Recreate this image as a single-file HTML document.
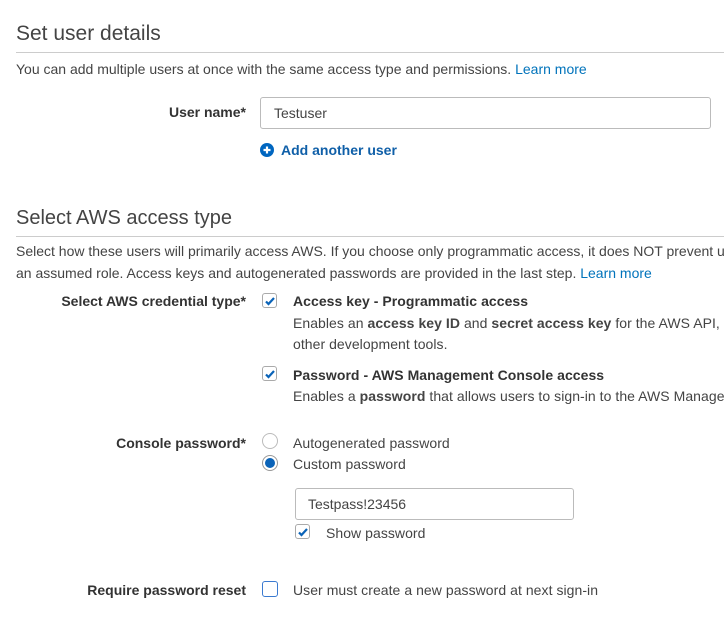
<!DOCTYPE html>
<html><head><style>
html,body{margin:0;width:724px;height:635px;overflow:hidden}
body{background:#fff;position:relative;font-family:"Liberation Sans",Arial,sans-serif;color:#444}
#w{position:absolute;left:0;top:0;width:724px;height:635px;overflow:hidden}
.a{position:absolute;white-space:nowrap}
h{position:absolute;font-size:21px;color:#444;white-space:nowrap}
.hr{position:absolute;left:16px;right:0;height:1px;background:#ccc}
.p{font-size:14px;color:#444}
.l{color:#0073bb}
.lab{font-weight:bold;font-size:14px;color:#333;text-align:right;right:478px}
.v{font-size:14px;color:#444;letter-spacing:0.05px}
.inp{position:absolute;border:1px solid #bbb;border-radius:3px;background:#fff;box-sizing:border-box;font-size:14px;color:#444;padding-left:13px;line-height:29px}
.cb{position:absolute;width:15px;height:15px;border:1px solid #aaa;border-radius:3px;box-sizing:border-box;background:#fff}
.cb svg{position:absolute;left:1px;top:1px}
.rd{position:absolute;width:16px;height:16px;border:1px solid #bbb;border-radius:50%;box-sizing:border-box}
</style></head><body><div id="w">
<h style="left:16px;top:22px">Set user details</h>
<div class="hr" style="top:52px"></div>
<div class="a p" style="left:16px;top:61px">You can add multiple users at once with the same access type and permissions. <span class="l">Learn more</span></div>
<div class="a lab" style="top:104px">User name*</div>
<div class="inp" style="left:260px;top:97px;width:451px;height:32px;line-height:31px">Testuser</div>
<svg class="a" style="left:260px;top:143px" width="14" height="14"><circle cx="7" cy="7" r="7" fill="#0066c0"/><path d="M7 3.5v7M3.5 7h7" stroke="#fff" stroke-width="2.2"/></svg>
<div class="a" style="left:281px;top:142px;font-size:14px;font-weight:bold;color:#0f5fa8">Add another user</div>

<h style="left:16px;top:207px;font-size:20px">Select AWS access type</h>
<div class="hr" style="top:236px"></div>
<div class="a p" style="left:16px;top:243px">Select how these users will primarily access AWS. If you choose only programmatic access, it does NOT prevent users from accessing via</div>
<div class="a p" style="left:16px;top:265px">an assumed role. Access keys and autogenerated passwords are provided in the last step. <span class="l">Learn more</span></div>

<div class="a lab" style="top:293px">Select AWS credential type*</div>
<div class="cb" style="left:262px;top:293px"><svg width="12" height="12"><path d="M2 6.5l2.5 2.5 5.5-6" stroke="#0a63b8" stroke-width="2.2" fill="none"/></svg></div>
<div class="a v" style="left:293px;top:293px;font-weight:bold;color:#333">Access key - Programmatic access</div>
<div class="a v" style="left:293px;top:315px">Enables an <b>access key ID</b> and <b>secret access key</b> for the AWS API, CLI, SDK, and</div>
<div class="a v" style="left:293px;top:336px">other development tools.</div>
<div class="cb" style="left:262px;top:366px"><svg width="12" height="12"><path d="M2 6.5l2.5 2.5 5.5-6" stroke="#0a63b8" stroke-width="2.2" fill="none"/></svg></div>
<div class="a v" style="left:293px;top:367px;font-weight:bold;color:#333">Password - AWS Management Console access</div>
<div class="a v" style="left:293px;top:388px">Enables a <b>password</b> that allows users to sign-in to the AWS Management Console.</div>

<div class="a lab" style="top:435px">Console password*</div>
<div class="rd" style="left:262px;top:433px"></div>
<div class="a v" style="left:293px;top:435px">Autogenerated password</div>
<div class="rd" style="left:262px;top:455px;border-color:#999"><div style="position:absolute;left:2px;top:2px;width:10px;height:10px;border-radius:50%;background:#0a63b8"></div></div>
<div class="a v" style="left:293px;top:456px">Custom password</div>
<div class="inp" style="left:295px;top:488px;width:279px;height:32px;padding-left:12px;line-height:31px">Testpass!23456</div>
<div class="cb" style="left:295px;top:524px"><svg width="12" height="12"><path d="M2 6.5l2.5 2.5 5.5-6" stroke="#0a63b8" stroke-width="2.2" fill="none"/></svg></div>
<div class="a v" style="left:326px;top:525px">Show password</div>

<div class="a lab" style="top:582px">Require password reset</div>
<div class="cb" style="left:262px;top:581px;width:16px;height:16px;border-color:#3b7ad0;border-width:1.5px"></div>
<div class="a v" style="left:293px;top:582px">User must create a new password at next sign-in</div>
</div></body></html>
